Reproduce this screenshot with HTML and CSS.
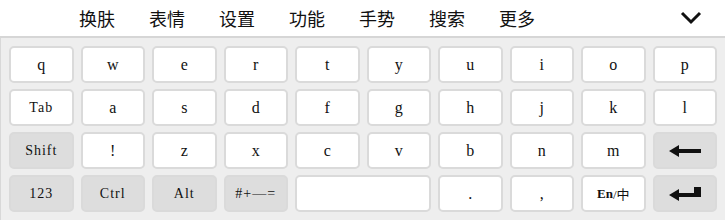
FILE: index.html
```html
<!DOCTYPE html>
<html lang="zh-CN">
<head>
    <meta charset="UTF-8">
    <meta name="viewport" content="width=device-width, initial-scale=1.0">
    <title>Keyboard</title>
    <link rel="stylesheet" href="styles.css">
</head>
<body>
    <div class="toolbar">
        <div class="menu">
            <span class="menu-item">换肤</span>
            <span class="menu-item">表情</span>
            <span class="menu-item">设置</span>
            <span class="menu-item">功能</span>
            <span class="menu-item">手势</span>
            <span class="menu-item">搜索</span>
            <span class="menu-item">更多</span>
        </div>
        <button class="collapse">
            <svg width="22" height="14" viewBox="0 0 22 14">
                <polyline points="2,2 11,11 20,2" fill="none" stroke="#111" stroke-width="3"/>
            </svg>
        </button>
    </div>

    <div class="keyboard">
        <!-- row 1 -->
        <div class="key">q</div>
        <div class="key">w</div>
        <div class="key">e</div>
        <div class="key">r</div>
        <div class="key">t</div>
        <div class="key">y</div>
        <div class="key">u</div>
        <div class="key">i</div>
        <div class="key">o</div>
        <div class="key">p</div>
        <!-- row 2 -->
        <div class="key label">Tab</div>
        <div class="key">a</div>
        <div class="key">s</div>
        <div class="key">d</div>
        <div class="key">f</div>
        <div class="key">g</div>
        <div class="key">h</div>
        <div class="key">j</div>
        <div class="key">k</div>
        <div class="key">l</div>
        <!-- row 3 -->
        <div class="key label fn">Shift</div>
        <div class="key">!</div>
        <div class="key">z</div>
        <div class="key">x</div>
        <div class="key">c</div>
        <div class="key">v</div>
        <div class="key">b</div>
        <div class="key">n</div>
        <div class="key">m</div>
        <div class="key fn">
            <svg width="32" height="12" viewBox="0 0 32 12">
                <polygon points="0,6 10,0 10,4 32,4 32,8 10,8 10,12" fill="#111"/>
            </svg>
        </div>
        <!-- row 4 -->
        <div class="key label fn">123</div>
        <div class="key label fn">Ctrl</div>
        <div class="key label fn">Alt</div>
        <div class="key label fn">#+—=</div>
        <div class="key space"></div>
        <div class="key">.</div>
        <div class="key">,</div>
        <div class="key lang"><b>En</b>/中</div>
        <div class="key fn">
            <svg width="32" height="14" viewBox="0 0 32 14">
                <polygon points="0,8 10,2 10,6 25,6 25,0 32,0 32,10 10,10 10,14" fill="#111"/>
            </svg>
        </div>
    </div>
</body>
</html>
```

FILE: styles.css
```css
body {
    margin: 0;
    width: 725px;
    height: 220px;
    background-color: #eeeeee;
    font-family: "Liberation Serif", serif;
    overflow: hidden;
}

.toolbar {
    display: flex;
    align-items: center;
    justify-content: space-between;
    height: 36px;
    background-color: #fff;
    border-bottom: 2px solid #d6d6d6;
}

.menu {
    display: flex;
    padding-left: 79px;
}

.menu-item {
    width: 70px;
    font-family: "Noto Sans CJK SC", sans-serif;
    font-size: 18px;
    color: #111;
}

.collapse {
    display: flex;
    align-items: center;
    justify-content: center;
    width: 40px;
    height: 36px;
    margin-right: 14px;
    padding: 0;
    background: none;
    border: none;
}

.keyboard {
    display: grid;
    grid-template-columns: repeat(10, 1fr);
    grid-auto-rows: 37px;
    gap: 6px 7px;
    padding: 8px;
    border-left: 1px solid #d8d8d8;
}

.key {
    display: flex;
    align-items: center;
    justify-content: center;
    background-color: #fff;
    border: 2px solid #dadada;
    border-radius: 5px;
    font-size: 16px;
    color: #111;
}

.key.label {
    font-size: 14px;
    letter-spacing: 1px;
}

.key.fn {
    background-color: #dddddd;
}

.key.space {
    grid-column: span 2;
}

.key.lang {
    font-family: "Liberation Serif", "Noto Sans CJK SC", serif;
    font-size: 13px;
    letter-spacing: 0;
}
```
